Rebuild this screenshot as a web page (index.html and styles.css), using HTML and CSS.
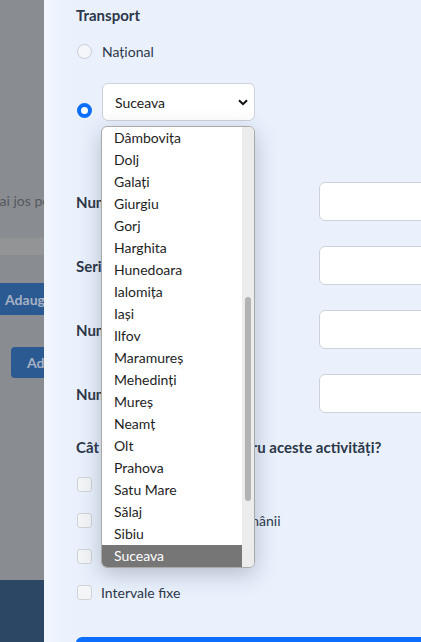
FILE: index.html
```html
<!DOCTYPE html>
<html lang="ro">
<head>
<meta charset="utf-8">
<title>Transport</title>
<link rel="stylesheet" href="styles.css">
</head>
<body>
<div class="page">
  <aside class="under">
    <div class="under-top"><span class="under-text">Vezi mai jos pentru detalii</span></div>
    <div class="under-band"></div>
    <div class="under-btn wide">Adaugă activitate</div>
    <div class="under-btn small">Adaugă</div>
    <div class="under-fill"></div>
    <div class="under-foot"></div>
  </aside>

  <main class="panel">
    <div class="section-title">Transport</div>

    <label class="radio-row">
      <span class="radio"></span>
      <span class="radio-text">Național</span>
    </label>

    <div class="radio-row select-row">
      <span class="radio checked"></span>
      <div class="select">
        <span>Suceava</span>
        <svg class="chev" width="10" height="7" viewBox="0 0 10 7"><path d="M1 1.2 L5 5.2 L9 1.2" fill="none" stroke="#111" stroke-width="2"/></svg>
      </div>
    </div>

    <div class="form">
      <div class="form-row"><span class="form-label">Număr de persoane</span><span class="input"></span></div>
      <div class="form-row"><span class="form-label">Seria actului</span><span class="input"></span></div>
      <div class="form-row"><span class="form-label">Număr de telefon</span><span class="input"></span></div>
      <div class="form-row"><span class="form-label">Număr de zile</span><span class="input"></span></div>
    </div>

    <div class="question">Cât timp aveți nevoie pentru aceste activități?</div>

    <div class="checks">
      <label class="check-row"><span class="check"></span><span>Oricând</span></label>
      <label class="check-row"><span class="check"></span><span>În anumite zile ale săptămânii</span></label>
      <label class="check-row"><span class="check"></span><span>Weekend</span></label>
      <label class="check-row"><span class="check"></span><span>Intervale fixe</span></label>
    </div>

    <div class="submit"></div>

    <div class="dropdown">
      <ul class="options">
        <li>Dâmbovița</li>
        <li>Dolj</li>
        <li>Galați</li>
        <li>Giurgiu</li>
        <li>Gorj</li>
        <li>Harghita</li>
        <li>Hunedoara</li>
        <li>Ialomița</li>
        <li>Iași</li>
        <li>Ilfov</li>
        <li>Maramureș</li>
        <li>Mehedinți</li>
        <li>Mureș</li>
        <li>Neamț</li>
        <li>Olt</li>
        <li>Prahova</li>
        <li>Satu Mare</li>
        <li>Sălaj</li>
        <li>Sibiu</li>
        <li class="selected">Suceava</li>
      </ul>
      <div class="scrollbar"><div class="thumb"></div></div>
    </div>
  </main>
</div>
</body>
</html>
```

FILE: styles.css
```css
* { box-sizing: border-box; }
html, body {
  margin: 0;
  padding: 0;
  width: 421px;
  height: 642px;
  overflow: hidden;
  font-family: Lato, "Open Sans", sans-serif;
}
.page {
  display: grid;
  grid-template-columns: 44px 1fr;
  height: 642px;
}

/* dimmed page underneath */
.under {
  display: flex;
  flex-direction: column;
  background: #898c91;
  overflow: hidden;
}
.under-top {
  height: 238px;
  padding-top: 192px;
  white-space: nowrap;
  font-size: 14px;
  color: #55595f;
}
.under-text { display: inline-block; margin-left: -41px; }
.under-band { height: 17px; background: #939496; }
.under-btn {
  background: #2b5992;
  color: #a6b2c4;
  font-weight: 700;
  font-size: 14px;
  white-space: nowrap;
  display: flex;
  align-items: center;
}
.under-btn.wide { margin-top: 28px; height: 32px; padding-left: 5px; }
.under-btn.small { margin-top: 32px; margin-left: 11px; height: 31px; padding-left: 16px; border-radius: 4px 0 0 4px; }
.under-fill { flex: 1; }
.under-foot { height: 62px; background: #2c4764; }

/* panel */
.panel {
  position: relative;
  background: linear-gradient(90deg, #f1f6fe 0px, #eaf1fd 30px, #eaf1fd 100%);
  padding-left: 32px;
  color: #2c3849;
  overflow: hidden;
}
.section-title {
  margin-top: 4px;
  line-height: 22px;
  font-size: 15px;
  font-weight: 700;
}
.radio-row {
  display: flex;
  align-items: center;
  gap: 10px;
  margin-top: 14px;
  height: 22px;
  font-size: 14px;
}
.radio {
  width: 15px;
  height: 15px;
  flex: none;
  border-radius: 50%;
  border: 1px solid #c7ccd3;
  background: #f4f6f9;
  margin-left: 1px;
}
.radio.checked {
  border: 4.5px solid #0d6efd;
  background: #fff;
}
.select-row {
  margin-top: 21px;
  height: 38px;
  align-items: flex-start;
}
.select-row .radio { margin-top: 20px; }
.select {
  width: 153px;
  height: 38px;
  background: #fff;
  border: 1px solid #cdd2d9;
  border-radius: 6px;
  display: flex;
  align-items: center;
  justify-content: space-between;
  padding: 0 6px 0 12px;
  font-size: 14px;
  color: #222;
}

.form {
  margin-top: 61px;
  display: flex;
  flex-direction: column;
  gap: 25px;
}
.form-row {
  display: grid;
  grid-template-columns: 243px 160px;
  align-items: center;
  height: 39px;
}
.form-label {
  font-size: 15px;
  font-weight: 700;
  white-space: nowrap;
}
.input {
  height: 39px;
  background: #fff;
  border: 1px solid #cdd2d9;
  border-radius: 6px;
}
.question {
  margin-top: 23px;
  font-size: 15px;
  font-weight: 700;
  line-height: 22px;
  white-space: nowrap;
}
.checks {
  margin-top: 15px;
  display: flex;
  flex-direction: column;
  gap: 14px;
}
.check-row {
  display: flex;
  align-items: center;
  gap: 9px;
  height: 22px;
  font-size: 14px;
  white-space: nowrap;
}
.check {
  width: 15px;
  height: 15px;
  flex: none;
  margin-left: 1px;
  border: 1px solid #cfd3d8;
  border-radius: 3px;
  background: #f4f5f7;
}
.submit {
  margin-top: 34px;
  height: 40px;
  background: #0d6efd;
  border-radius: 6px 0 0 0;
}

/* open native dropdown */
.dropdown {
  position: absolute;
  left: 57px;
  top: 126px;
  width: 154px;
  height: 442px;
  background: #fff;
  border: 1px solid #a9a9a9;
  border-radius: 6px;
  box-shadow: 0 6px 22px rgba(40, 50, 70, 0.28);
  display: flex;
  overflow: hidden;
}
.options {
  list-style: none;
  margin: 0;
  padding: 0;
  flex: 1;
}
.options li {
  height: 22px;
  line-height: 22px;
  padding-left: 12px;
  font-size: 14px;
  color: #1e1e1e;
}
.options li.selected {
  background: #767676;
  color: #fff;
}
.scrollbar {
  width: 12px;
  background: #ececec;
  position: relative;
  flex: none;
}
.thumb {
  position: absolute;
  left: 3px;
  top: 170px;
  width: 6px;
  height: 204px;
  border-radius: 3px;
  background: #b3b3b3;
}
```
